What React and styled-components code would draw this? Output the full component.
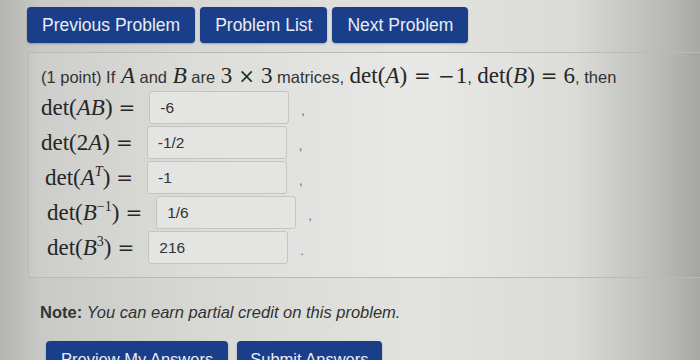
import styled, { createGlobalStyle } from "styled-components";

const GlobalStyle = createGlobalStyle`
    html, body {
        margin: 0;
        padding: 0;
        width: 700px;
        height: 360px;
        overflow: hidden;
    }
    body {
        background: linear-gradient(90deg, #b4b5b1 0%, #c9cac6 6%, #d8d9d5 30%, #e2e3df 60%, #dadbd7 82%, #b9bab6 95%, #a8a9a5 100%);
        font-family: "Liberation Sans", Arial, sans-serif;
        color: #333;
    }
`

export default function App() {
    const answers = [
        { label: <>det(<I>AB</I>)</>, value: "-6", sep: ",", indent: 0 },
        { label: <>det(2<I>A</I>)</>, value: "-1/2", sep: ",", indent: 0 },
        { label: <>det(<I>A</I><Sup><I>T</I></Sup>)</>, value: "-1", sep: ",", indent: 4 },
        { label: <>det(<I>B</I><Sup>−1</Sup>)</>, value: "1/6", sep: ",", indent: 6 },
        { label: <>det(<I>B</I><Sup>3</Sup>)</>, value: "216", sep: ".", indent: 6 },
    ]

    return (
        <Page>
            <GlobalStyle />
            <NavBar>
                <NavButton>Previous Problem</NavButton>
                <NavButton>Problem List</NavButton>
                <NavButton>Next Problem</NavButton>
            </NavBar>
            <ProblemBox>
                <Intro>
                    (1 point) If <MathText $inline><I>A</I></MathText> and <MathText $inline><I>B</I></MathText> are{" "}
                    <MathText $inline>3<Op $gap={6}>×</Op>3</MathText> matrices,{" "}
                    <MathText $inline>det(<I>A</I>)<Op $gap={7}>=</Op><Minus>−</Minus>1</MathText>,{" "}
                    <MathText $inline>det(<I>B</I>)<Op $gap={6}>=</Op>6</MathText>, then
                </Intro>
                {answers.map((a, i) => (
                    <AnswerRow key={i} $indent={a.indent}>
                        <MathText>{a.label}<Op $gap={6}>=</Op></MathText>
                        <AnswerInput defaultValue={a.value} />
                        <Sep>{a.sep}</Sep>
                    </AnswerRow>
                ))}
            </ProblemBox>
            <Note>
                <b>Note:</b> <i>You can earn partial credit on this problem.</i>
            </Note>
            <SubmitBar>
                <NavButton $pad="15px" $size="16.5px">Preview My Answers</NavButton>
                <NavButton $pad="13px" $size="16.5px">Submit Answers</NavButton>
            </SubmitBar>
        </Page>
    )
}

const Page = styled.div`
    padding: 7px 0 0 27px;
`

const NavBar = styled.div`
    display: flex;
    flex-direction: row;
    gap: 5px;
`

const NavButton = styled.button`
    height: 36px;
    padding: 0 ${p => p.$pad || "15px"};
    background-color: #1b3e8a;
    color: #e9edf5;
    border: none;
    border-radius: 4px;
    font-family: "Liberation Sans", Arial, sans-serif;
    font-size: ${p => p.$size || "17.5px"};
    box-shadow: 0 1px 2px rgba(0, 0, 0, 0.25);
`

const ProblemBox = styled.div`
    margin: 9px 0 0 1px;
    height: 213px;
    padding: 11px 0 0 12px;
    border: 1px solid #b9bab6;
    border-right: none;
    border-radius: 3px 0 0 3px;
    background: linear-gradient(90deg, rgba(255,255,255,0.08), rgba(255,255,255,0.2) 60%, rgba(0,0,0,0.02));
`

const Intro = styled.div`
    font-size: 16.5px;
    line-height: 24px;
    color: #333;
    white-space: nowrap;
`

const MathText = styled.span`
    font-family: "Liberation Serif", "DejaVu Serif", serif;
    font-size: 23px;
    color: #262626;
    white-space: nowrap;
    margin-left: ${p => (p.$inline ? "1px" : "0")};
`

const Op = styled.span`
    font-family: "DejaVu Serif", serif;
    font-size: 20px;
    margin: 0 ${p => p.$gap}px;
`

const Minus = styled.span`
    font-family: "DejaVu Serif", serif;
    font-size: 20px;
    margin-right: 1px;
`

const I = styled.i`
    font-style: italic;
`

const Sup = styled.sup`
    font-size: 14px;
    line-height: 0;
`

const AnswerRow = styled.div`
    display: flex;
    flex-direction: row;
    align-items: center;
    gap: 8px;
    height: 33px;
    margin-top: 2px;
    padding-left: ${p => p.$indent}px;
`

const AnswerInput = styled.input`
    width: 140px;
    height: 33px;
    box-sizing: border-box;
    padding: 0 10px;
    border: 1px solid #c4c5c1;
    border-radius: 3px;
    background: #e4e5e2;
    font-family: "Liberation Sans", Arial, sans-serif;
    font-size: 15.5px;
    color: #333;
    outline: none;
`

const Sep = styled.span`
    font-size: 13px;
    color: #666;
    margin-left: 4px;
    margin-top: 6px;
`

const Note = styled.div`
    margin: 25px 0 0 13px;
    font-size: 16.5px;
    color: #333;
`

const SubmitBar = styled.div`
    display: flex;
    flex-direction: row;
    gap: 9px;
    margin: 19px 0 0 19px;
`
